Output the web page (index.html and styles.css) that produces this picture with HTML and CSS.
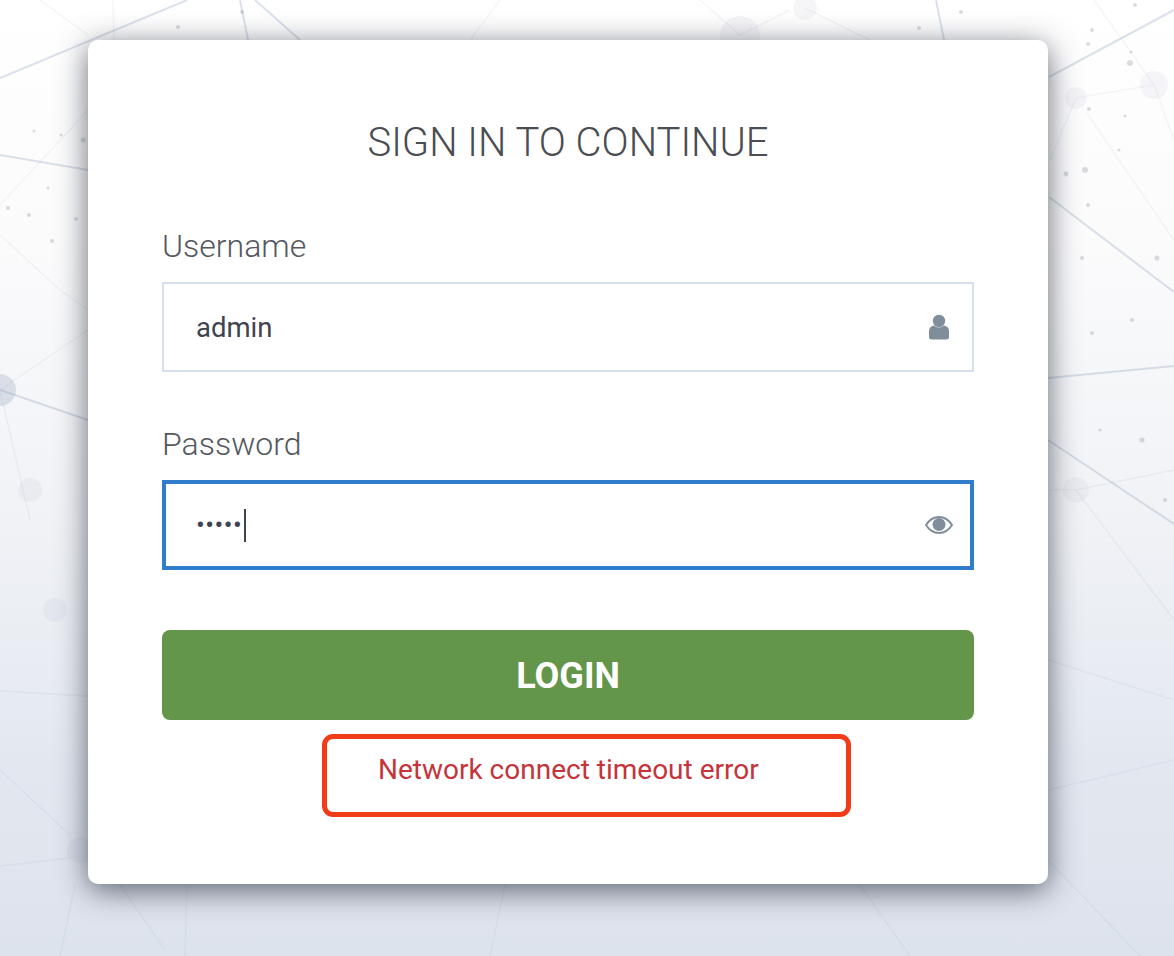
FILE: index.html
```html
<!DOCTYPE html>
<html lang="en">
<head>
    <meta charset="UTF-8">
    <meta name="viewport" content="width=device-width, initial-scale=1.0">
    <title>Sign in</title>
    <link rel="stylesheet" href="styles.css">
</head>
<body>
    <!-- network pattern behind the card -->
    <svg class="backdrop" viewBox="0 0 1174 956" aria-hidden="true">
        <g class="links-strong">
            <path d="M0 78L187 0"/>
            <path d="M0 155L88 170"/>
            <path d="M240 0L248 40"/>
            <path d="M255 0L300 40"/>
            <path d="M936 0L944 40"/>
            <path d="M1049 77L1174 10"/>
            <path d="M1049 197L1174 292"/>
            <path d="M0 390L88 420"/>
            <path d="M1048 378L1174 366"/>
            <path d="M1048 440L1174 524"/>
        </g>
        <g class="links-soft">
            <path d="M113 0L114 40"/>
            <path d="M40 0L88 35"/>
            <path d="M500 0L470 40"/>
            <path d="M700 0L740 35L790 10"/>
            <path d="M805 8L870 40"/>
            <path d="M0 390L88 330"/>
            <path d="M0 390L30 520"/>
            <path d="M0 205L88 110"/>
            <path d="M0 235L60 290L88 310"/>
            <path d="M1094 0L1154 85L1076 98"/>
            <path d="M1154 85L1174 140"/>
            <path d="M1076 98L1050 160"/>
            <path d="M1086 112L1174 240"/>
            <path d="M1050 490L1076 490L1174 470"/>
            <path d="M1076 490L1174 620"/>
            <path d="M1048 660L1174 700"/>
            <path d="M0 691L88 696"/>
            <path d="M0 770L70 835"/>
            <path d="M0 866L70 858"/>
            <path d="M120 885L165 950"/>
            <path d="M187 885L185 956"/>
            <path d="M75 885L60 956"/>
            <path d="M505 885L490 956"/>
            <path d="M860 885L910 956"/>
            <path d="M1048 790L1174 760"/>
            <path d="M1048 860L1140 956"/>
        </g>
        <g class="nodes">
            <circle class="node-dark" cx="0" cy="390" r="16"/>
            <circle cx="740" cy="36" r="20"/>
            <circle cx="805" cy="8" r="12"/>
            <circle cx="1154" cy="85" r="14"/>
            <circle cx="1076" cy="98" r="11"/>
            <circle cx="1076" cy="490" r="13"/>
            <circle cx="30" cy="490" r="12"/>
            <circle cx="55" cy="610" r="12"/>
            <circle cx="80" cy="850" r="13"/>
        </g>
        <g class="specks">
            <circle cx="34" cy="131" r="1.500"/>
            <circle cx="61" cy="135" r="1.500"/>
            <circle cx="83" cy="140" r="2.500"/>
            <circle cx="48" cy="188" r="1.500"/>
            <circle cx="8" cy="208" r="2"/>
            <circle cx="29" cy="215" r="2"/>
            <circle cx="76" cy="219" r="2"/>
            <circle cx="52" cy="241" r="2"/>
            <circle cx="178" cy="27" r="2"/>
            <circle cx="242" cy="12" r="2"/>
            <circle cx="919" cy="28" r="2"/>
            <circle cx="961" cy="12" r="2"/>
            <circle cx="1135" cy="5" r="2"/>
            <circle cx="1092" cy="30" r="2"/>
            <circle cx="1088" cy="44" r="2"/>
            <circle cx="1131" cy="52" r="1.500"/>
            <circle cx="1130" cy="63" r="3"/>
            <circle cx="1089" cy="109" r="2"/>
            <circle cx="1125" cy="116" r="1.500"/>
            <circle cx="1119" cy="150" r="1.500"/>
            <circle cx="1066" cy="174" r="2.500"/>
            <circle cx="1085" cy="170" r="3"/>
            <circle cx="1088" cy="205" r="2"/>
            <circle cx="1082" cy="258" r="2"/>
            <circle cx="1157" cy="258" r="2.500"/>
            <circle cx="1092" cy="333" r="2"/>
            <circle cx="1132" cy="320" r="2"/>
            <circle cx="1142" cy="440" r="2.500"/>
            <circle cx="1100" cy="430" r="1.500"/>
            <circle cx="1165" cy="500" r="2"/>
        </g>
    </svg>

    <main class="login-card">
        <h1 class="login-title">SIGN IN TO CONTINUE</h1>

        <label class="field-label" for="username">Username</label>
        <div class="field">
            <input class="field-input" id="username" type="text" value="admin">
            <svg class="field-icon" viewBox="0 0 22 26" width="22" height="26" aria-hidden="true">
                <circle cx="11" cy="7" r="6.200"/>
                <path d="M1 23v-6c0-3 2-5 5-5.500c1.400 1.300 3 2 5 2s3.600-.7 5-2c3 .5 5 2.500 5 5.500v6c0 1.500-1 2.500-2.500 2.500h-15C2 25.500 1 24.500 1 23z"/>
            </svg>
        </div>

        <label class="field-label" for="password">Password</label>
        <div class="field field-focus">
            <input class="field-input field-dots" id="password" type="text" value="•••••">
            <span class="caret"></span>
            <svg class="field-icon" viewBox="0 0 28 20" width="28" height="20" aria-hidden="true">
                <path d="M1 10C4.500 4.500 9 2 14 2s9.500 2.500 13 8c-3.500 5.500-8 8-13 8S4.500 15.500 1 10z" fill="none" stroke-width="2"/>
                <circle cx="14" cy="9.500" r="6.500"/>
            </svg>
        </div>

        <button class="login-button" type="button">LOGIN</button>

        <div class="login-error">
            <p class="error-text">Network connect timeout error</p>
        </div>
    </main>
</body>
</html>
```

FILE: styles.css
```css
* {
    margin: 0;
    padding: 0;
    box-sizing: border-box;
}

body {
    position: relative;
    width: 1174px;
    height: 956px;
    overflow: hidden;
    padding-top: 40px;
    font-family: Roboto, "Liberation Sans", sans-serif;
    background: linear-gradient(#ffffff 0%, #fbfbfc 25%, #f0f2f6 55%, #e3e8f0 80%, #dde3ec 100%);
}

.backdrop {
    position: absolute;
    top: 0;
    left: 0;
    width: 1174px;
    height: 956px;
    filter: blur(0.6px);
}

.links-strong path {
    fill: none;
    stroke: rgba(110, 135, 170, 0.24);
    stroke-width: 2;
}

.links-soft path {
    fill: none;
    stroke: rgba(120, 135, 160, 0.08);
    stroke-width: 1.500;
}

.nodes circle {
    fill: rgba(150, 150, 190, 0.09);
}

.nodes .node-dark {
    fill: rgba(120, 135, 165, 0.22);
}

.specks circle {
    fill: rgba(90, 100, 115, 0.22);
}

.login-card {
    position: relative;
    width: 960px;
    height: 844px;
    margin-left: 88px;
    padding: 62px 74px 0;
    background: #fff;
    border-radius: 10px;
    box-shadow: 0 6px 30px rgba(30, 35, 50, 0.68);
}

.login-title {
    font-size: 40px;
    font-weight: 300;
    line-height: 82px;
    text-align: center;
    color: #4a4d52;
    margin-bottom: 42px;
}

.field-label {
    display: block;
    font-size: 32px;
    font-weight: 300;
    line-height: 40px;
    color: #54585e;
}

.field {
    position: relative;
    display: flex;
    align-items: center;
    height: 90px;
    margin-top: 16px;
    margin-bottom: 52px;
    border: 2px solid #d5e0ea;
}

.field-focus {
    height: 90px;
    margin-top: 16px;
    margin-bottom: 60px;
    border: 4px solid #2f7dcb;
}

.field-input {
    flex: 1;
    min-width: 0;
    height: 100%;
    padding-left: 32px;
    border: 0;
    outline: 0;
    background: transparent;
    font-family: inherit;
    font-size: 27.500px;
    color: #3f4350;
}

.field-dots {
    padding-left: 30px;
    font-size: 26px;
    letter-spacing: 0.500px;
}

.caret {
    position: absolute;
    left: 78px;
    top: 25px;
    width: 2px;
    height: 33px;
    background: #3f4350;
}

.field-icon {
    margin-right: 22px;
    fill: #808d9a;
    stroke: #808d9a;
    stroke-width: 0;
}

.field-focus .field-icon {
    margin-right: 17px;
}

.field-focus .field-icon circle {
    stroke: none;
}

.login-button {
    display: block;
    width: 812px;
    height: 90px;
    padding-top: 2px;
    border: 0;
    border-radius: 8px;
    background: #63964a;
    color: #fff;
    font-family: inherit;
    font-size: 36px;
    font-weight: 700;
}

.login-error {
    position: absolute;
    left: 234px;
    top: 694px;
    width: 529px;
    height: 83px;
    border: 5px solid #f13c18;
    border-radius: 11px;
}

.error-text {
    margin-left: 51px;
    margin-top: 11px;
    font-size: 28px;
    line-height: 40px;
    color: #c4343a;
    white-space: nowrap;
}
```
